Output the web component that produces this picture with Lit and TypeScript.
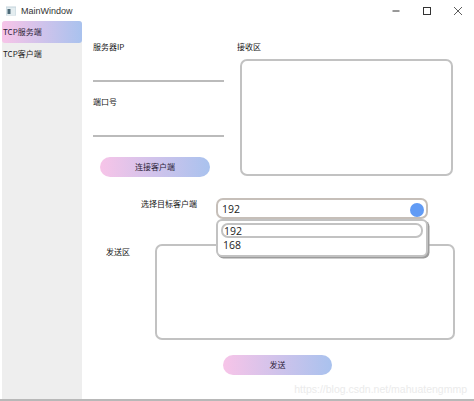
import { LitElement, html, css } from "lit";
import { customElement } from "lit/decorators.js";

@customElement("app-root")
export class AppRoot extends LitElement {
  static styles = css`
    :host {
      display: block;
      width: 474px;
      height: 401px;
      overflow: hidden;
      background: #fff;
      color: #151515;
      font-family: "Noto Sans CJK SC", "Liberation Sans", sans-serif;
      font-size: 8px;
      position: relative;
    }
    .titlebar {
      height: 21px;
      display: flex;
      align-items: center;
      padding: 0 1px 0 6px;
      color: #333;
    }
    .appicon { width: 10px; height: 10px; display: block; margin-right: 5px; }
    .title { font-family: "Liberation Sans", sans-serif; font-size: 9px; flex: 1; }
    .winbtn { width: 31px; height: 21px; display: flex; align-items: center; justify-content: center; }
    .winbtn svg { width: 10px; height: 10px; display: block; }
    .body { display: flex; height: 378px; padding-left: 2px; }
    .sidebar { width: 80px; background: #eeeeee; flex: none; border-radius: 3px 3px 0 0; }
    .item { height: 22px; line-height: 22px; padding-left: 1px; font-size: 8px; color: #222; }
    .item.sel { background: linear-gradient(90deg, #f7c4e8, #a9c2ee); border-radius: 3px; color: #2c2238; }
    .main { flex: 1; min-width: 0; position: relative; }
    .top { display: flex; padding-left: 11px; padding-top: 20px; }
    .left { width: 131px; flex: none; display: flex; flex-direction: column; }
    .label { height: 12px; line-height: 12px; white-space: nowrap; }
    .line { height: 2px; background: #bbbbbb; }
    .line.a { margin-top: 27px; }
    .gap { height: 14px; }
    .line.b { margin-top: 27px; }
    .btn {
      border-radius: 10px;
      background: linear-gradient(90deg, #f7c4e8, #a9c2ee);
      height: 20px;
      line-height: 20px;
      text-align: center;
      color: #2c2238;
    }
    .connect { width: 110px; margin-left: 7px; margin-top: 20px; }
    .right { margin-left: 13px; width: 216px; display: flex; flex-direction: column; }
    .box {
      box-sizing: border-box;
      border: 2px solid #c2c2c2;
      border-radius: 7px;
      background: #fff;
    }
    .recv { margin-left: 3px; margin-top: 6px; width: 213px; height: 117px; }
    .combo-row { display: flex; margin-top: 21px; padding-left: 59px; position: relative; }
    .combo-label { width: 75px; flex: none; height: 12px; line-height: 12px; }
    .combo {
      position: relative;
      box-sizing: border-box;
      width: 212px;
      height: 21px;
      border: 2px solid #c6bfb9;
      border-radius: 7px;
      font-family: "Open Sans", sans-serif;
      font-size: 10.5px;
      line-height: 18px;
      padding-left: 4px;
      color: #222;
      background: #fff;
    }
    .dot {
      position: absolute;
      right: 2px;
      top: 3px;
      width: 14px;
      height: 14px;
      border-radius: 50%;
      background: #619bf5;
    }
    .popup {
      position: absolute;
      left: 134px;
      top: 21px;
      z-index: 2;
      box-sizing: border-box;
      width: 212px;
      height: 38px;
      padding: 2px 3px;
      border: 2px solid #c2c2c2;
      border-radius: 6px;
      background: #fff;
      box-shadow: 1.5px 1.5px 0 #9c9c9c;
      font-family: "Open Sans", sans-serif;
      font-size: 10.5px;
      color: #222;
    }
    .opt { height: 15px; line-height: 15px; padding-left: 2px; }
    .opt.on { box-sizing: border-box; border: 2px solid #c2c2c2; border-radius: 7px; line-height: 12px; width: 202px; padding-left: 1px; }
    .send-row { display: flex; margin-top: 25px; padding-left: 24px; }
    .send-label { width: 49px; flex: none; height: 12px; line-height: 12px; margin-top: 2px; }
    .send { width: 300px; height: 96px; }
    .send-btn-row { padding-left: 141px; margin-top: 15px; }
    .send-btn { width: 109px; }
    .mark {
      position: absolute;
      right: 7px;
      bottom: 6px;
      font-family: "Liberation Sans", sans-serif;
      font-size: 10.5px;
      color: #ebebeb;
    }
    .bottom { height: 2px; background: #b8b8b8; }
  `;

  render() {
    return html`
      <div class="titlebar">
        <svg class="appicon" viewBox="0 0 10 10">
          <rect x="0" y="0.5" width="10" height="9" fill="#c3d3dc"/>
          <rect x="0.5" y="1.5" width="9" height="7.5" fill="#e4edf0"/>
          <rect x="1.5" y="3" width="3" height="5" fill="#4d6a78"/>
        </svg>
        <div class="title">MainWindow</div>
        <div class="winbtn">
          <svg viewBox="0 0 10 10"><path d="M1.5 5H8.5" stroke="#333" stroke-width="1" fill="none"/></svg>
        </div>
        <div class="winbtn">
          <svg viewBox="0 0 10 10"><rect x="1.5" y="1.5" width="7" height="7" stroke="#333" stroke-width="1" fill="none"/></svg>
        </div>
        <div class="winbtn">
          <svg viewBox="0 0 10 10"><path d="M1 1L9 9M9 1L1 9" stroke="#333" stroke-width="0.8" fill="none"/></svg>
        </div>
      </div>
      <div class="body">
        <div class="sidebar">
          <div class="item sel">TCP服务端</div>
          <div class="item">TCP客户端</div>
        </div>
        <div class="main">
          <div class="top">
            <div class="left">
              <div class="label">服务器IP</div>
              <div class="line a"></div>
              <div class="gap"></div>
              <div class="label">端口号</div>
              <div class="line b"></div>
              <div class="btn connect">连接客户端</div>
            </div>
            <div class="right">
              <div class="label">接收区</div>
              <div class="box recv"></div>
            </div>
          </div>
          <div class="combo-row">
            <div class="combo-label">选择目标客户端</div>
            <div class="combo">192<span class="dot"></span></div>
            <div class="popup">
              <div class="opt on">192</div>
              <div class="opt">168</div>
            </div>
          </div>
          <div class="send-row">
            <div class="send-label">发送区</div>
            <div class="box send"></div>
          </div>
          <div class="send-btn-row"><div class="btn send-btn">发送</div></div>
        </div>
      </div>
      <div class="bottom"></div>
      <div class="mark">https://blog.csdn.net/mahuatengmmp</div>
    `;
  }
}
